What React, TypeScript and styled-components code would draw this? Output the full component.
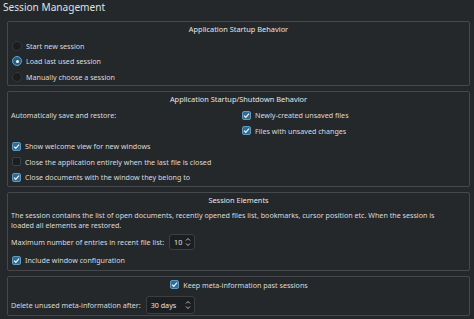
import styled, { createGlobalStyle } from "styled-components";

const GlobalStyle = createGlobalStyle`
  html, body {
    margin: 0;
    padding: 0;
    background: #25282b;
  }
  body {
    font-family: "Noto Sans", "DejaVu Sans", sans-serif;
    color: #d9dbdd;
    font-size: 7.15px;
  }
`;

const Page = styled.div`
  width: 474px;
  height: 319px;
  box-sizing: border-box;
  padding: 0 4px 0 3px;
  overflow: hidden;
`;

const Heading = styled.div`
  font-size: 10.1px;
  line-height: 14px;
  height: 21px;
  color: #dfe1e3;
`;

const Groups = styled.div`
  display: flex;
  flex-direction: column;
  gap: 5px;
  margin-left: 4px;
`;

const Group = styled.div<{ $pb?: number }>`
  border: 1px solid #45494d;
  border-radius: 2px;
  padding: 0 3px ${(p) => p.$pb ?? 0}px 3px;
`;

const GroupTitle = styled.div<{ $gap?: number }>`
  text-align: center;
  font-size: 7.4px;
  line-height: 15px;
  height: 15px;
  margin-bottom: ${(p) => p.$gap ?? 0}px;
  color: #e4e6e8;
`;

type RowProps = { $center?: boolean; $h?: number; $mt?: number };

const Row = styled.div<RowProps>`
  display: flex;
  align-items: center;
  justify-content: ${(p) => (p.$center ? "center" : "flex-start")};
  height: ${(p) => p.$h ?? 15.5}px;
  margin-top: ${(p) => p.$mt ?? 0}px;
  gap: 4px;
  white-space: nowrap;
`;

const FormGrid = styled.div`
  display: grid;
  grid-template-columns: 230px 1fr;
`;

const FieldColumn = styled.div`
  display: flex;
  flex-direction: column;
`;

const Paragraph = styled.div`
  line-height: 9.7px;
  padding: 3px 8px 3px 0;
`;

const Box = styled.span<{ $checked?: boolean }>`
  width: 9px;
  height: 9px;
  margin-left: 1px;
  border-radius: 2px;
  box-sizing: border-box;
  flex: none;
  display: flex;
  align-items: center;
  justify-content: center;
  border: 1px solid ${(p) => (p.$checked ? "#5b9cc4" : "#3d4145")};
  background: ${(p) => (p.$checked ? "#356a8e" : "#1b1e21")};
`;

const Radio = styled.span<{ $checked?: boolean }>`
  width: 10px;
  height: 10px;
  margin-left: 1px;
  border-radius: 50%;
  box-sizing: border-box;
  flex: none;
  display: flex;
  align-items: center;
  justify-content: center;
  border: 1px solid ${(p) => (p.$checked ? "#5ba6d6" : "#34383c")};
  background: ${(p) => (p.$checked ? "#2c5a7a" : "#1b1e21")};
`;

const Dot = styled.span`
  width: 3px;
  height: 3px;
  border-radius: 50%;
  background: #f0f4f7;
`;

const Spin = styled.div<{ $w: number; $h: number }>`
  width: ${(p) => p.$w}px;
  height: ${(p) => p.$h}px;
  box-sizing: border-box;
  border: 1px solid #3b3f43;
  border-radius: 3px;
  background: #1c1f22;
  display: flex;
  align-items: center;
  justify-content: space-between;
  padding: 0 3px 0 4px;
  margin-left: 1px;
  color: #e2e4e6;
`;

function Check({ on }: { on?: boolean }) {
  return (
    <Box $checked={on}>
      {on && (
        <svg width="7" height="7" viewBox="0 0 7 7">
          <path d="M1 3.6 L2.8 5.3 L6 1.6" fill="none" stroke="#f2f5f7" strokeWidth="1.2" />
        </svg>
      )}
    </Box>
  );
}

function Chevrons() {
  return (
    <svg width="6" height="10" viewBox="0 0 6 10">
      <path d="M1 3.5 L3 1.5 L5 3.5 M1 6.5 L3 8.5 L5 6.5" fill="none" stroke="#c8cacc" strokeWidth="0.9" />
    </svg>
  );
}

export default function App() {
  return (
    <>
      <GlobalStyle />
      <Page>
        <Heading>Session Management</Heading>
        <Groups>
          <Group $pb={0.5}>
            <GroupTitle $gap={1}>Application Startup Behavior</GroupTitle>
            <Row>
              <Radio />
              Start new session
            </Row>
            <Row>
              <Radio $checked>
                <Dot />
              </Radio>
              Load last used session
            </Row>
            <Row>
              <Radio />
              Manually choose a session
            </Row>
          </Group>

          <Group $pb={1}>
            <GroupTitle $gap={0.5}>Application Startup/Shutdown Behavior</GroupTitle>
            <FormGrid>
              <Row>Automatically save and restore:</Row>
              <FieldColumn>
                <Row>
                  <Check on />
                  Newly-created unsaved files
                </Row>
                <Row>
                  <Check on />
                  Files with unsaved changes
                </Row>
              </FieldColumn>
            </FormGrid>
            <Row>
              <Check on />
              Show welcome view for new windows
            </Row>
            <Row>
              <Check />
              Close the application entirely when the last file is closed
            </Row>
            <Row>
              <Check on />
              Close documents with the window they belong to
            </Row>
          </Group>

          <Group $pb={0.5}>
            <GroupTitle>Session Elements</GroupTitle>
            <Paragraph>
              The session contains the list of open documents, recently opened files list, bookmarks, cursor
              position etc. When the session is loaded all elements are restored.
            </Paragraph>
            <Row $h={18}>
              Maximum number of entries in recent file list:
              <Spin $w={26} $h={16}>
                10
                <Chevrons />
              </Spin>
            </Row>
            <Row $h={18}>
              <Check on />
              Include window configuration
            </Row>
          </Group>

          <Group $pb={1}>
            <Row $center $h={16}>
              <Check on />
              Keep meta-information past sessions
            </Row>
            <Row $h={18} $mt={3}>
              Delete unused meta-information after:
              <Spin $w={49} $h={18}>
                30 days
                <Chevrons />
              </Spin>
            </Row>
          </Group>
        </Groups>
      </Page>
    </>
  );
}
